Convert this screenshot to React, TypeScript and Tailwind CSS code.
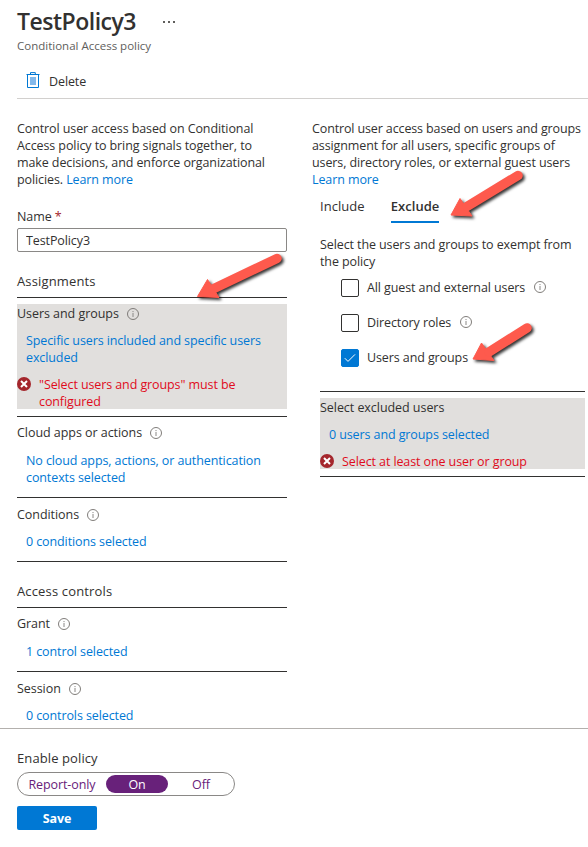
import React, { useState } from 'react';
import clsx from 'clsx';

const InfoIcon: React.FC = () => (
  <svg viewBox="0 0 12 12" className="w-3 h-3 shrink-0" fill="none">
    <circle cx="6" cy="6" r="5.5" stroke="#797673" strokeWidth="0.95" />
    <path d="M6 5v4M6 3v1.1" stroke="#8a8886" strokeWidth="1" />
  </svg>
);

const ErrorIcon: React.FC = () => (
  <svg viewBox="0 0 14 14" className="w-3.5 h-3.5 shrink-0 mt-[1px]" fill="none">
    <circle cx="7" cy="7" r="7" fill="#a4262c" />
    <path d="M4 4l6 6M10 4l-6 6" stroke="#fff" strokeWidth="2" />
  </svg>
);

const TrashIcon: React.FC = () => (
  <svg viewBox="0 0 14 16" className="w-3.5 h-4 shrink-0 mb-[3px]" fill="none">
    <path d="M0.5 2.5h13M4.5 2.3V0.6h4.8v1.7" stroke="#0078d4" strokeWidth="1" />
    <path d="M1.5 2.5v13h11v-13" stroke="#0078d4" strokeWidth="1" />
    <path d="M4 5h6v8h-6z" fill="#83b9eb" />
  </svg>
);

interface ArrowProps {
  className: string;
  points: string;
  shaft: string;
}

// Callout arrow, the tip is at the lower left
const Arrow: React.FC<ArrowProps> = ({ className, points, shaft }) => (
  <svg
    className={clsx('absolute overflow-visible pointer-events-none w-[90px] h-[50px]', className)}
    viewBox="0 0 90 50"
  >
    <g className="drop-shadow-[2px_2px_1.5px_rgba(0,0,0,0.8)]">
      <polygon points={points} fill="#fe5a4d" stroke="#fe5a4d" strokeWidth="1" strokeLinejoin="round" />
      <path d={shaft} stroke="#fe5a4d" strokeWidth="9.5" strokeLinecap="round" />
    </g>
  </svg>
);

interface SectionProps {
  title: string;
  info?: boolean;
  className?: string;
  children: React.ReactNode;
}

const Section: React.FC<SectionProps> = ({ title, info = true, className, children }) => (
  <div className={className}>
    <div className="flex items-center gap-2">
      <span className="tracking-[-0.05px]">{title}</span>
      {info && <InfoIcon />}
    </div>
    {children}
  </div>
);

const SettingLink: React.FC<{ children: React.ReactNode }> = ({ children }) => (
  <a className="block mt-2.5 pl-[9px] text-[#0078d4] cursor-pointer whitespace-nowrap">{children}</a>
);

const Learn: React.FC = () => <a className="text-[#0078d4] cursor-pointer">Learn more</a>;

interface CheckRowProps {
  label: string;
  checked: boolean;
  info?: boolean;
  onToggle: () => void;
}

const CheckRow: React.FC<CheckRowProps> = ({ label, checked, info, onToggle }) => (
  <div className="flex items-center h-[18px]">
    <button
      onClick={onToggle}
      className={clsx(
        'w-[18px] h-[18px] mr-2 rounded-[2px] border flex items-center justify-center cursor-pointer shrink-0',
        checked ? 'bg-[#0078d4] border-[#0078d4]' : 'bg-white border-[#323130]'
      )}
    >
      {checked && (
        <svg viewBox="0 0 12 10" className="w-3 h-2.5" fill="none">
          <path d="M0.8 5.2l3.2 3.2L11 1.4" stroke="#fff" strokeWidth="1" />
        </svg>
      )}
    </button>
    <span className="mr-[9px] mb-[2px]">{label}</span>
    {info && <span className="mb-[2px]"><InfoIcon /></span>}
  </div>
);

const MODES = [
  { label: 'Report-only', width: 'w-[88px]' },
  { label: 'On', width: 'w-[62px]' },
  { label: 'Off', width: 'w-[66px]' },
];

export default function App() {
  const [name, setName] = useState('TestPolicy3');
  const [tab, setTab] = useState('Exclude');
  const [mode, setMode] = useState('On');
  const [checks, setChecks] = useState([false, false, true]);

  const toggle = (i: number) => setChecks(checks.map((c, n) => (n === i ? !c : c)));

  return (
    <div className="relative w-[588px] h-[847px] overflow-hidden bg-white text-[#323130] font-['Open_Sans','Noto_Sans',sans-serif] text-[12.5px] leading-[17px] tracking-[-0.1px]">
      {/* Header */}
      <div className="pl-[17px] pt-[5px] h-[98px]">
        <div className="flex items-center">
          <h1 className="text-[23px] leading-8 font-semibold tracking-[-0.5px] w-[146px]">{name}</h1>
          <div className="flex gap-[3px] mt-[2px]">
            <span className="w-[2px] h-[2px] bg-[#605e5c]" />
            <span className="w-[2px] h-[2px] bg-[#605e5c]" />
            <span className="w-[2px] h-[2px] bg-[#605e5c]" />
          </div>
        </div>
        <p className="mt-[1px] text-[11.5px] leading-4 tracking-normal text-[#605e5c]">Conditional Access policy</p>
        <button className="flex items-center gap-[9px] ml-[9px] mt-[18px] cursor-pointer">
          <TrashIcon />
          Delete
        </button>
      </div>
      <div className="ml-[17px] h-px bg-[#d2d0ce]" />

      {/* Policy body */}
      <div className="flex h-[629px] pt-[21px] pl-[17px]">
        <div className="w-[270px] shrink-0 whitespace-nowrap">
          <p>
            Control user access based on Conditional<br />
            Access policy to bring signals together, to<br />
            make decisions, and enforce organizational<br />
            policies. <Learn />
          </p>
          <label className="block mt-5">
            Name <span className="text-[#a4262c]">*</span>
          </label>
          <input
            value={name}
            onChange={e => setName(e.target.value)}
            className="block w-full h-6 mt-[3px] px-2 border border-[#8a8886] rounded-[2px] outline-none"
          />
          <h2 className="mt-[21px] text-[13px] tracking-[0.15px]">Assignments</h2>
          <div className="mt-[7px] h-px bg-[#323130]" />
          <Section title="Users and groups" className="mt-1.5 pt-[1px] h-[105px] bg-[#e1dfdd]">
            <SettingLink>
              Specific users included and specific users<br />
              excluded
            </SettingLink>
            <div className="flex gap-2 mt-2.5 text-[#e00b1c]">
              <ErrorIcon />
              <span>"Select users and groups" must be<br />configured</span>
            </div>
          </Section>
          <div className="mt-[7px] h-px bg-[#323130]" />
          <Section title="Cloud apps or actions" className="pt-[7px] h-20">
            <div className="h-px" />
            <SettingLink>
              No cloud apps, actions, or authentication<br />
              contexts selected
            </SettingLink>
          </Section>
          <div className="h-px bg-[#323130]" />
          <Section title="Conditions" className="pt-2 h-[63px]">
            <SettingLink>0 conditions selected</SettingLink>
          </Section>
          <div className="h-px bg-[#323130]" />
          <h2 className="mt-[21px] text-[13px] tracking-[0.15px]">Access controls</h2>
          <div className="mt-[7px] h-px bg-[#323130]" />
          <Section title="Grant" className="pt-[7px] h-[63px]">
            <div className="h-px" />
            <SettingLink>1 control selected</SettingLink>
          </Section>
          <div className="h-px bg-[#323130]" />
          <Section title="Session" className="pt-2">
            <SettingLink>0 controls selected</SettingLink>
          </Section>
        </div>

        <div className="w-[273px] ml-[25px] shrink-0 whitespace-nowrap">
          <p>
            <span className="tracking-[-0.13px]">Control user access based on users and groups</span><br />
            assignment for all users, specific groups of<br />
            users, directory roles, or external guest users<br />
            <Learn />
          </p>
          <div className="pl-2">
            <div className="flex mt-[9px] text-[13px] tracking-[0.05px]">
              {['Include', 'Exclude'].map(label => (
                <button
                  key={label}
                  onClick={() => setTab(label)}
                  className={clsx(
                    'h-[26px] pb-[5px] mr-[26px] border-b-2 cursor-pointer',
                    tab === label ? 'border-[#0078d4] font-semibold' : 'border-transparent'
                  )}
                >
                  {label}
                </button>
              ))}
            </div>
            <p className="mt-[13px]">
              Select the users and groups to exempt from<br />
              the policy
            </p>
            <div className="mt-[9px] ml-[21px] flex flex-col gap-[17px]">
              <CheckRow label="All guest and external users" checked={checks[0]} info onToggle={() => toggle(0)} />
              <CheckRow label="Directory roles" checked={checks[1]} info onToggle={() => toggle(1)} />
              <CheckRow label="Users and groups" checked={checks[2]} onToggle={() => toggle(2)} />
            </div>
            <div className="mt-6 h-px bg-[#323130]" />
            <Section title="Select excluded users" info={false} className="mt-1.5 pt-[1px] h-[71px] bg-[#e1dfdd]">
              <SettingLink>0 users and groups selected</SettingLink>
              <div className="flex gap-2 mt-2.5 text-[#e00b1c]">
                <ErrorIcon />
                <span>Select at least one user or group</span>
              </div>
            </Section>
            <div className="mt-[7px] h-px bg-[#323130]" />
          </div>
        </div>
      </div>

      {/* Footer */}
      <div className="border-t border-[#b3b0ad] pt-[21px] pl-[17px]">
        <p className="text-[13px] tracking-[0.1px]">Enable policy</p>
        <div className="flex items-center w-[218px] h-6 mt-[5px] border border-[#8a8886] rounded-full">
          {MODES.map(m => (
            <button
              key={m.label}
              onClick={() => setMode(m.label)}
              className={clsx(
                'h-[18px] rounded-full text-center cursor-pointer',
                m.width,
                mode === m.label ? 'bg-[#68217a] text-white' : 'text-[#68217a]'
              )}
            >
              {m.label}
            </button>
          ))}
        </div>
        <button className="w-20 h-6 mt-[10px] bg-[#0078d4] text-white font-bold rounded-[2px] cursor-pointer">Save</button>
      </div>

      <Arrow className="left-[195px] top-[250px]" points="2.5,46.5 12.5,29.5 24,47.5" shaft="M18 39L82 8.5" />
      <Arrow className="left-[448px] top-[168px]" points="3,47 12,30.5 24,48" shaft="M19 38.5L70 7.5" />
      <Arrow className="left-[470px] top-[313px]" points="3,46 11.5,30 24,47.5" shaft="M19 39L57 15" />
    </div>
  );
}
